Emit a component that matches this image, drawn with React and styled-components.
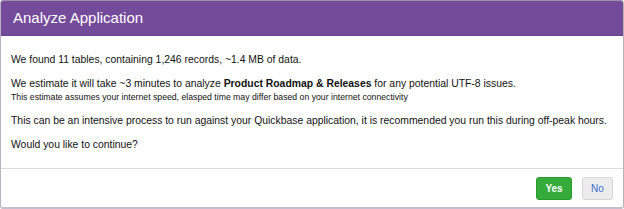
import React from 'react'
import styled, { createGlobalStyle } from 'styled-components'

const GlobalStyle = createGlobalStyle`
	html, body {
		margin: 0;
		padding: 0;
		background: #ffffff;
	}
	body {
		font-family: 'Liberation Sans', Arial, sans-serif;
	}
`

const App = () => {
	return (
		<>
			<GlobalStyle />
			<StyledDialog>
				<StyledHeader>Analyze Application</StyledHeader>
				<StyledBody>
					<StyledText>We found 11 tables, containing 1,246 records, ~1.4 MB of data.</StyledText>
					<StyledText>
						We estimate it will take ~3 minutes to analyze <b>Product Roadmap &amp; Releases</b> for any potential UTF-8 issues.
						<StyledNote>This estimate assumes your internet speed, elasped time may differ based on your internet connectivity</StyledNote>
					</StyledText>
					<StyledText>This can be an intensive process to run against your Quickbase application, it is recommended you run this during off-peak hours.</StyledText>
					<StyledText>Would you like to continue?</StyledText>
				</StyledBody>
				<StyledFooter>
					<StyledButton variant='yes'>Yes</StyledButton>
					<StyledButton variant='no'>No</StyledButton>
				</StyledFooter>
			</StyledDialog>
		</>
	)
}

const StyledDialog = styled.div`
	width: 624px;
	height: 209px;
	box-sizing: border-box;
	border: 1px solid #b9b3c6;
	border-top-color: #9b93a8;
	border-right-color: #b5b5b5;
	border-bottom: 2px solid #c4bfd0;
	border-radius: 3px;
	display: flex;
	flex-direction: column;
	overflow: hidden;
	background: #fff;
`

const StyledHeader = styled.div`
	height: 34px;
	flex-shrink: 0;
	background: #744a9a;
	border-bottom: 1px solid #6a4290;
	color: #ffffff;
	font-size: 15px;
	line-height: 34px;
	padding-left: 12px;
`

const StyledBody = styled.div`
	padding: 18px 4px 0 10px;
	height: 133px;
	box-sizing: border-box;
	flex-shrink: 0;
	color: #111;
	font-size: 10.4px;
	line-height: 12px;
	white-space: nowrap;
	border-bottom: 1px solid #dcd8e2;
`

const StyledText = styled.p`
	margin: 0 0 12px;
	b {
		font-weight: bold;
	}
`

const StyledNote = styled.span`
	display: block;
	font-size: 8.7px;
	line-height: 12px;
	margin-top: 1px;
`

const StyledFooter = styled.div`
	flex: 1;
	display: flex;
	justify-content: flex-end;
	align-items: center;
	gap: 10px;
	padding-right: 10px;
`

const StyledButton = styled.button`
	height: 23px;
	box-sizing: border-box;
	border-radius: 3px;
	font-family: 'Liberation Sans', Arial, sans-serif;
	font-size: 10px;
	font-weight: ${(p) => (p.variant === 'yes' ? 'bold' : 'normal')};
	padding: 0;
	width: ${(p) => (p.variant === 'yes' ? '36px' : '31px')};
	color: ${(p) => (p.variant === 'yes' ? '#ffffff' : '#3a6fcf')};
	background: ${(p) => (p.variant === 'yes' ? '#35ab3b' : '#ececec')};
	border: 1px solid ${(p) => (p.variant === 'yes' ? '#2a9a30' : '#d6d6d6')};
	cursor: pointer;
`

export default App
